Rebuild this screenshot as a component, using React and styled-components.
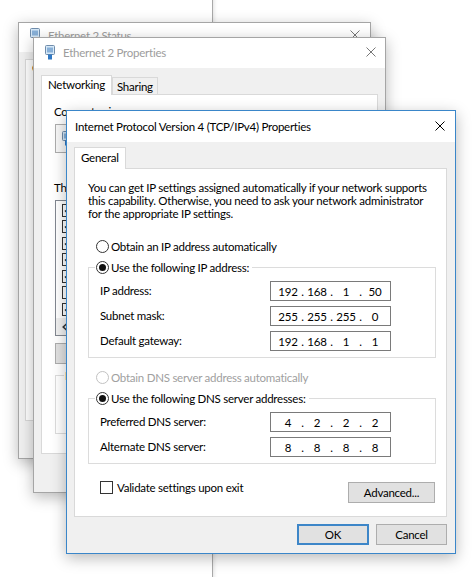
import React from "react";
import styled, { createGlobalStyle } from "styled-components";

const Global = createGlobalStyle`
  html, body { margin: 0; padding: 0; background: #fff; }
  body {
    font-family: Lato, "Noto Sans", "DejaVu Sans", sans-serif;
    font-size: 11.5px;
    letter-spacing: -0.25px;
    color: #000;
  }
  * { box-sizing: border-box; }
`;

const Desktop = styled.div`
  position: relative;
  width: 474px;
  height: 577px;
  overflow: hidden;
  background: #fff;
`;

const BackWindow = styled.div`
  position: absolute;
  z-index: 0;
  left: -20px;
  top: -20px;
  width: 233px;
  height: 620px;
  background: #fff;
  border-right: 1px solid #a9a9a9;
  box-shadow: 1px 0 4px rgba(0, 0, 0, 0.12);
`;

const Window = styled.div`
  position: absolute;
  z-index: ${(p) => p.$z};
  left: ${(p) => p.$x}px;
  top: ${(p) => p.$y}px;
  width: ${(p) => p.$w}px;
  height: ${(p) => p.$h}px;
  border: 1px solid ${(p) => (p.$active ? "#3a86c9" : "#a5a5a5")};
  background: #f0f0f0;
  box-shadow: 0 4px 14px rgba(0, 0, 0, 0.28);
  display: flex;
  flex-direction: column;
`;

const TitleBar = styled.div`
  height: ${(p) => p.$h}px;
  flex: none;
  background: #fff;
  display: flex;
  align-items: center;
  padding-left: ${(p) => p.$pl}px;
  padding-bottom: ${(p) => p.$pb}px;
  gap: 8px;
`;

const TitleText = styled.span`
  flex: 1;
  white-space: nowrap;
  color: ${(p) => (p.$active ? "#000" : "#9d9d9d")};
`;

const CloseBtn = styled.span`
  width: ${(p) => p.$w}px;
  flex: none;
  display: flex;
  justify-content: center;
  align-items: center;
`;

const Body = styled.div`
  flex: 1;
  display: flex;
  flex-direction: column;
  padding: ${(p) => p.$pad};
`;

const TabRow = styled.div`
  display: flex;
  align-items: flex-end;
  margin-bottom: -1px;
`;

const Tab = styled.div`
  position: ${(p) => (p.$sel ? "relative" : "static")};
  z-index: ${(p) => (p.$sel ? 2 : "auto")};
  height: ${(p) => (p.$sel ? p.$h : p.$h - 2)}px;
  padding: ${(p) => (p.$sel ? "0 6px 3px 6px" : "0 4px 0 4px")};
  background: ${(p) => (p.$sel ? "#fff" : "#f0f0f0")};
  border: 1px solid #d9d9d9;
  border-bottom: none;
  white-space: nowrap;
  display: flex;
  align-items: center;
`;

const Panel = styled.div`
  position: relative;
  z-index: 1;
  flex: 1;
  background: #fff;
  border: 1px solid #d9d9d9;
  display: flex;
  flex-direction: column;
  padding: ${(p) => p.$pad};
`;

const Label = styled.div`
  line-height: 14px;
  white-space: nowrap;
  margin-top: ${(p) => p.$mt || 0}px;
  margin-left: ${(p) => p.$ml || 0}px;
`;

const Paragraph = styled.div`
  line-height: 13px;
  white-space: nowrap;
`;

/* ---------- radio / checkbox ---------- */
const RadioCircle = styled.span`
  width: 13px;
  height: 13px;
  flex: none;
  border-radius: 50%;
  border: 1px solid ${(p) => (p.$disabled ? "#c2c2c2" : "#333")};
  background: #fff;
  display: inline-flex;
  align-items: center;
  justify-content: center;
  &::after {
    content: "";
    display: ${(p) => (p.$checked ? "block" : "none")};
    width: 7px;
    height: 7px;
    border-radius: 50%;
    background: #111;
  }
`;

const RadioRow = styled.div`
  display: flex;
  align-items: center;
  gap: 2px;
  height: 15px;
  white-space: nowrap;
  margin-top: ${(p) => p.$mt || 0}px;
  margin-left: ${(p) => p.$ml || 0}px;
  color: ${(p) => (p.$disabled ? "#a0a0a0" : "#000")};
`;

const CheckSquare = styled.span`
  width: 13px;
  height: 13px;
  flex: none;
  border: 1px solid #333;
  background: #fff;
  display: inline-flex;
  align-items: center;
  justify-content: center;
`;

const CheckRow = styled.label`
  display: flex;
  align-items: center;
  gap: 4px;
  height: 13px;
  white-space: nowrap;
`;

/* ---------- group box ---------- */
const GroupBox = styled.div`
  border: 1px solid #dcdcdc;
  display: flex;
  flex-direction: column;
  margin-top: ${(p) => p.$mt}px;
  padding: ${(p) => p.$pad};
  height: ${(p) => (p.$h ? `${p.$h}px` : "auto")};
`;

const Legend = styled.div`
  align-self: flex-start;
  height: 15px;
  margin: -8px 0 0 ${(p) => p.$ml}px;
  padding: 0 3px 0 1px;
  background: #fff;
  display: flex;
  align-items: center;
  gap: 2px;
  white-space: nowrap;
`;

const Fields = styled.div`
  display: flex;
  flex-direction: column;
  gap: 5px;
  margin-top: 6px;
`;

const FieldRow = styled.div`
  display: flex;
  align-items: center;
  justify-content: space-between;
  height: 20px;
`;

const IpBox = styled.div`
  width: 121px;
  height: 20px;
  border: 1px solid #7a7a7a;
  background: #fff;
  display: flex;
  align-items: center;
  padding-left: 5px;
`;

const Seg = styled.span`
  width: 24px;
  text-align: center;
`;

const Dot = styled.span`
  width: 5px;
  text-align: center;
`;

/* ---------- buttons ---------- */
const Button = styled.div`
  width: ${(p) => p.$w}px;
  height: 21px;
  flex: none;
  background: #e1e1e1;
  border: ${(p) => (p.$default ? "2px solid #3d86c8" : "1px solid #adadad")};
  display: flex;
  align-items: center;
  justify-content: center;
  margin-top: ${(p) => p.$mt || 0}px;
  white-space: nowrap;
`;

const BottomRow = styled.div`
  display: flex;
  justify-content: space-between;
  align-items: flex-start;
  margin-top: 17px;
  padding: 0 1px 0 12px;
`;

const ButtonRow = styled.div`
  display: flex;
  justify-content: flex-end;
  gap: 7px;
  margin-top: 7px;
`;

/* ---------- Properties window parts ---------- */
const AdapterBox = styled.div`
  height: 29px;
  margin-top: 5px;
  border: 1px solid #adadad;
  background: #f7f7f7;
  display: flex;
  align-items: center;
  padding-left: 6px;
`;

const ListBox = styled.div`
  height: 136px;
  margin-top: 5px;
  border: 1px solid #828790;
  background: #fff;
  display: flex;
  flex-direction: column;
  padding-top: 1px;
`;

const ListItem = styled.div`
  height: 16.5px;
  display: flex;
  align-items: center;
  padding-left: 6px;
`;

const HScroll = styled.div`
  margin-top: auto;
  height: 17px;
  background: #f0f0f0;
  display: flex;
  align-items: center;
`;

const ScrollArrow = styled.span`
  width: 17px;
  display: flex;
  justify-content: center;
  align-items: center;
`;

const SmallBtnRow = styled.div`
  display: flex;
  gap: 8px;
  margin-top: 7px;
`;

const Close = ({ color = "#000" }) => (
  <svg width="10" height="10" viewBox="0 0 10 10">
    <path d="M0.5 0.5 L9.5 9.5 M9.5 0.5 L0.5 9.5" stroke={color} strokeWidth="1" />
  </svg>
);

const NetIcon = () => (
  <svg width="10" height="15" viewBox="0 0 10 15">
    <rect x="0.5" y="0.5" width="9" height="9" rx="1" fill="#d6e8f7" stroke="#6f8cab" />
    <path d="M3 2.5 V7.5 M5 2.5 V7.5 M7 2.5 V7.5" stroke="#3a79b9" strokeWidth="1" />
    <rect x="3" y="9.5" width="4" height="5" fill="#2f78c4" />
  </svg>
);

const Check = () => (
  <svg width="9" height="9" viewBox="0 0 9 9">
    <path d="M1 4.5 L3.5 7 L8 1.5" stroke="#222" strokeWidth="1.4" fill="none" />
  </svg>
);

const Ip = ({ parts }) => (
  <IpBox>
    <Seg>{parts[0]}</Seg>
    <Dot>.</Dot>
    <Seg>{parts[1]}</Seg>
    <Dot>.</Dot>
    <Seg>{parts[2]}</Seg>
    <Dot>.</Dot>
    <Seg>{parts[3]}</Seg>
  </IpBox>
);

const Radio = ({ checked, disabled, children, mt, ml }) => (
  <RadioRow $disabled={disabled} $mt={mt} $ml={ml}>
    <RadioCircle $checked={checked} $disabled={disabled} />
    <span>{children}</span>
  </RadioRow>
);

const listChecks = [true, true, true, true, true, false, true];

export default function App() {
  return (
    <>
      <Global />
      <Desktop>
        <BackWindow />

        {/* Ethernet 2 Status */}
        <Window $z={1} $x={18} $y={22} $w={353} $h={437}>
          <TitleBar $h={29} $pl={11} $pb={5}>
            <NetIcon />
            <TitleText>Ethernet 2 Status</TitleText>
            <CloseBtn $w={30}>
              <Close color="#777" />
            </CloseBtn>
          </TitleBar>
          <Body $pad="7px 7px 37px 6px">
            <Panel $pad="1px 6px">
              <Label>Connection</Label>
            </Panel>
          </Body>
        </Window>

        {/* Ethernet 2 Properties */}
        <Window $z={2} $x={33} $y={37} $w={353} $h={456}>
          <TitleBar $h={30} $pl={11} $pb={2}>
            <NetIcon />
            <TitleText>Ethernet 2 Properties</TitleText>
            <CloseBtn $w={28}>
              <Close color="#777" />
            </CloseBtn>
          </TitleBar>
          <Body $pad="7px 7px 38px 7px">
            <TabRow>
              <Tab $sel $h={20}>Networking</Tab>
              <Tab $h={20}>Sharing</Tab>
            </TabRow>
            <Panel $pad="0 12px 0 13px">
              <Label $mt={10} $ml={-1}>Connect using:</Label>
              <AdapterBox>
                <NetIcon />
              </AdapterBox>
              <Label $mt={28} $ml={-1}>This connection uses the following items:</Label>
              <ListBox>
                {listChecks.map((on, i) => (
                  <ListItem key={i}>
                    <CheckSquare>{on && <Check />}</CheckSquare>
                  </ListItem>
                ))}
                <HScroll>
                  <ScrollArrow>
                    <svg width="6" height="8" viewBox="0 0 6 8">
                      <path d="M5 0.5 L1.2 4 L5 7.5" stroke="#333" strokeWidth="1.5" fill="none" />
                    </svg>
                  </ScrollArrow>
                </HScroll>
              </ListBox>
              <SmallBtnRow>
                <Button $w={90} />
                <Button $w={90} />
              </SmallBtnRow>
              <GroupBox $mt={11} $h={59} $pad="0 8px">
                <Legend $ml={0}>Description</Legend>
              </GroupBox>
            </Panel>
          </Body>
        </Window>

        {/* Internet Protocol Version 4 (TCP/IPv4) Properties */}
        <Window $z={3} $x={66} $y={110} $w={390} $h={444} $active>
          <TitleBar $h={31} $pl={8} $pb={1}>
            <TitleText $active>Internet Protocol Version 4 (TCP/IPv4) Properties</TitleText>
            <CloseBtn $w={30}>
              <Close />
            </CloseBtn>
          </TitleBar>
          <Body $pad="5px 8px 8px 7px">
            <TabRow>
              <Tab $sel $h={22}>General</Tab>
            </TabRow>
            <Panel $pad="12px 10px 0 13px">
              <Paragraph>
                You can get IP settings assigned automatically if your network supports
                <br />
                this capability. Otherwise, you need to ask your network administrator
                <br />
                for the appropriate IP settings.
              </Paragraph>

              <Radio mt={19} ml={8}>Obtain an IP address automatically</Radio>

              <GroupBox $mt={13} $pad="0 44px 6px 11px">
                <Legend $ml={-5}>
                  <RadioCircle $checked />
                  <span>Use the following IP address:</span>
                </Legend>
                <Fields>
                  <FieldRow>
                    <Label>IP address:</Label>
                    <Ip parts={["192", "168", "1", "50"]} />
                  </FieldRow>
                  <FieldRow>
                    <Label>Subnet mask:</Label>
                    <Ip parts={["255", "255", "255", "0"]} />
                  </FieldRow>
                  <FieldRow>
                    <Label>Default gateway:</Label>
                    <Ip parts={["192", "168", "1", "1"]} />
                  </FieldRow>
                </Fields>
              </GroupBox>

              <Radio disabled mt={12} ml={8}>Obtain DNS server address automatically</Radio>

              <GroupBox $mt={13} $pad="0 44px 6px 11px">
                <Legend $ml={-5}>
                  <RadioCircle $checked />
                  <span>Use the following DNS server addresses:</span>
                </Legend>
                <Fields>
                  <FieldRow>
                    <Label>Preferred DNS server:</Label>
                    <Ip parts={["4", "2", "2", "2"]} />
                  </FieldRow>
                  <FieldRow>
                    <Label>Alternate DNS server:</Label>
                    <Ip parts={["8", "8", "8", "8"]} />
                  </FieldRow>
                </Fields>
              </GroupBox>

              <BottomRow>
                <CheckRow>
                  <CheckSquare />
                  <span>Validate settings upon exit</span>
                </CheckRow>
                <Button $w={87} $mt={1}>Advanced...</Button>
              </BottomRow>
            </Panel>
            <ButtonRow>
              <Button $w={72} $default>OK</Button>
              <Button $w={71}>Cancel</Button>
            </ButtonRow>
          </Body>
        </Window>
      </Desktop>
    </>
  );
}
